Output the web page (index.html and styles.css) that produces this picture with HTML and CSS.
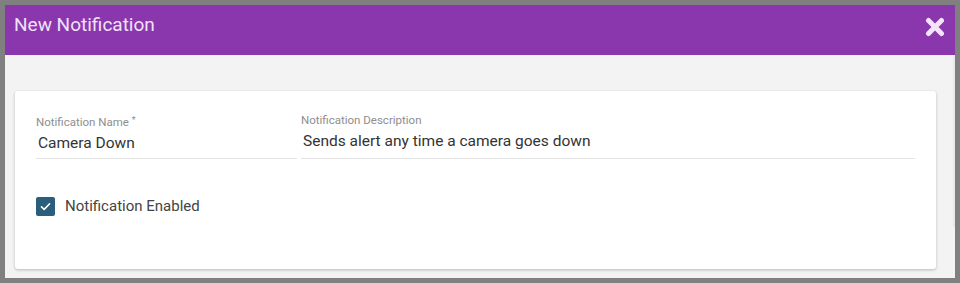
FILE: index.html
```html
<!DOCTYPE html>
<html>
<head>
<meta charset="utf-8">
<link rel="stylesheet" href="styles.css">
</head>
<body>
<div class="dialog">
  <div class="header">
    <div class="title">New Notification</div>
    <button class="close" aria-label="Close">
      <svg width="20" height="20" viewBox="0 0 20 20"><path d="M3.5 3.5 L16.5 16.5 M16.5 3.5 L3.5 16.5" stroke="#f3e4fa" stroke-width="5" stroke-linecap="round"/></svg>
    </button>
  </div>
  <div class="content">
    <div class="card">
      <div class="fields">
        <div class="field">
          <div class="label">Notification Name <span class="req">*</span></div>
          <div class="value">Camera Down</div>
        </div>
        <div class="field">
          <div class="label">Notification Description</div>
          <div class="value">Sends alert any time a camera goes down</div>
        </div>
      </div>
      <label class="check">
        <span class="box"><svg width="13" height="13" viewBox="0 0 13 13"><path d="M2.5 6.8 L5.2 9.4 L10.6 3.8" fill="none" stroke="#fff" stroke-width="1.6" stroke-linecap="round" stroke-linejoin="round"/></svg></span>
        <span class="check-text">Notification Enabled</span>
      </label>
    </div>
    <div class="scroll"></div>
  </div>
</div>
</body>
</html>
```
FILE: styles.css
```css
html, body {
  margin: 0;
  padding: 0;
  background: #808080;
  font-family: Roboto, "Liberation Sans", Arial, sans-serif;
}
.dialog {
  margin: 5px;
  height: 273px;
  background: #f3f3f3;
  display: flex;
  flex-direction: column;
}
.header {
  height: 50px;
  background: #8a37ae;
  display: flex;
  justify-content: space-between;
  align-items: flex-start;
  padding: 0 10px 0 9px;
  flex-shrink: 0;
}
.title {
  color: #f0e2f7;
  font-size: 19px;
  line-height: 22px;
  padding-top: 9px;
}
.close {
  border: 0;
  background: none;
  padding: 0;
  margin-top: 12px;
  width: 20px;
  height: 20px;
  cursor: pointer;
}
.close svg { display: block; }
.content {
  flex: 1;
  position: relative;
  padding: 36px 19px 9px 10px;
}
.card {
  background: #fff;
  border-radius: 3px;
  box-shadow: 0 1px 3px rgba(0,0,0,0.25);
  height: 178px;
  box-sizing: border-box;
  padding: 22px 21px 0 21px;
}
.fields {
  display: grid;
  grid-template-columns: 261px 1fr;
  gap: 4px;
}
.field {
  border-bottom: 1px solid #e3e3e3;
  padding-bottom: 5px;
}
.label {
  color: #8e8e8e;
  font-size: 11.5px;
  line-height: 14px;
}
.req { font-size: 9px; vertical-align: 3px; }
.value {
  color: #333;
  font-size: 15.5px;
  line-height: 20px;
  padding-left: 2px;
  margin-top: 4px;
}
.check {
  display: flex;
  align-items: center;
  margin-top: 38px;
}
.box {
  width: 19px;
  height: 19px;
  border-radius: 2px;
  background: #2b5e7a;
  display: flex;
  align-items: center;
  justify-content: center;
}
.box svg { display: block; }
.check-text {
  color: #444;
  font-size: 15px;
  margin-left: 10px;
  position: relative;
  top: -1px;
}
.scroll {
  position: absolute;
  right: 0;
  top: 0;
  width: 2px;
  height: 172px;
  background: #e9e9e9;
}
```
